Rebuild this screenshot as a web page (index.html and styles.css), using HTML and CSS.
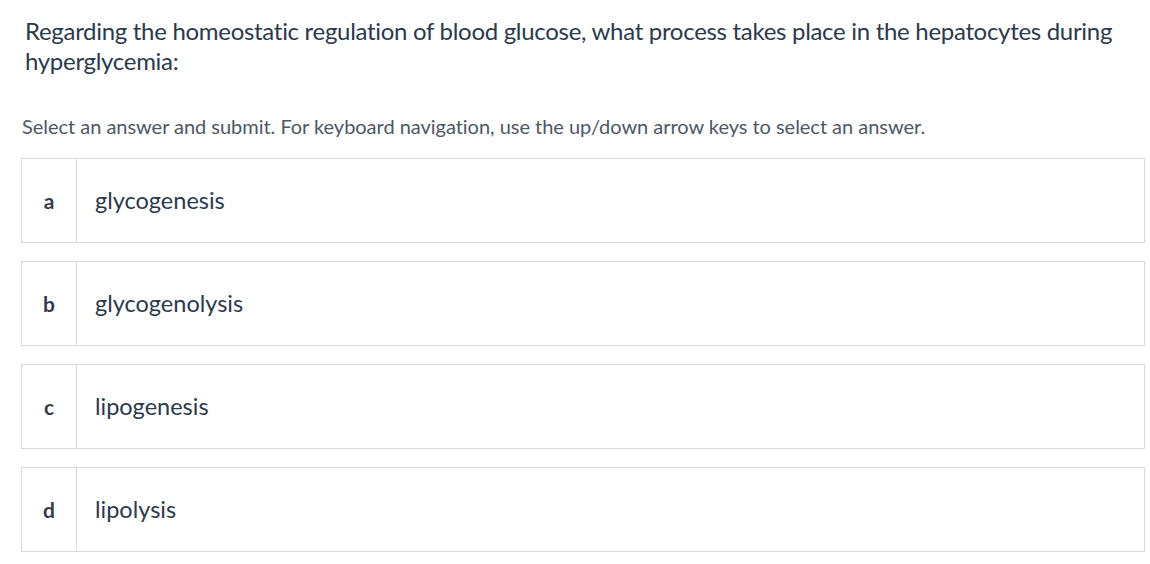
FILE: index.html
```html
<!DOCTYPE html>
<html>
<head>
<meta charset="utf-8">
<link rel="stylesheet" href="styles.css">
</head>
<body>
<main class="page">
  <h1 class="question">Regarding the homeostatic regulation of blood glucose, what process takes place in the hepatocytes during hyperglycemia:</h1>
  <p class="hint">Select an answer and submit. For keyboard navigation, use the up/down arrow keys to select an answer.</p>
  <ul class="options">
    <li class="option"><span class="letter">a</span><span class="text">glycogenesis</span></li>
    <li class="option"><span class="letter">b</span><span class="text">glycogenolysis</span></li>
    <li class="option"><span class="letter">c</span><span class="text">lipogenesis</span></li>
    <li class="option"><span class="letter">d</span><span class="text">lipolysis</span></li>
  </ul>
</main>
</body>
</html>
```
FILE: styles.css
```css
html, body {
  margin: 0;
  padding: 0;
  background: #fff;
}
.page {
  font-family: Lato, "Open Sans", sans-serif;
  padding: 16px 5px 0 21px;
}
.question {
  margin: 0 0 0 4px;
  font-size: 24px;
  line-height: 30px;
  font-weight: 400;
  letter-spacing: -0.3px;
  color: #2b3a4c;
  max-width: 1100px;
}
.hint {
  margin: 37px 0 19px 1px;
  font-size: 20px;
  line-height: 26px;
  letter-spacing: -0.03px;
  color: #4d5865;
}
.options {
  list-style: none;
  margin: 0;
  padding: 0;
  display: flex;
  flex-direction: column;
  gap: 18px;
}
.option {
  display: flex;
  height: 83px;
  border: 1px solid #d8dadf;
  color: #2b3a4c;
}
.letter {
  width: 54px;
  flex: none;
  border-right: 1px solid #d8dadf;
  display: flex;
  align-items: center;
  justify-content: center;
  font-size: 21px;
  font-weight: 700;
  color: #333d49;
}
.text {
  display: flex;
  align-items: center;
  padding-left: 18px;
  font-size: 23.5px;
  padding-bottom: 2px;
}
```
